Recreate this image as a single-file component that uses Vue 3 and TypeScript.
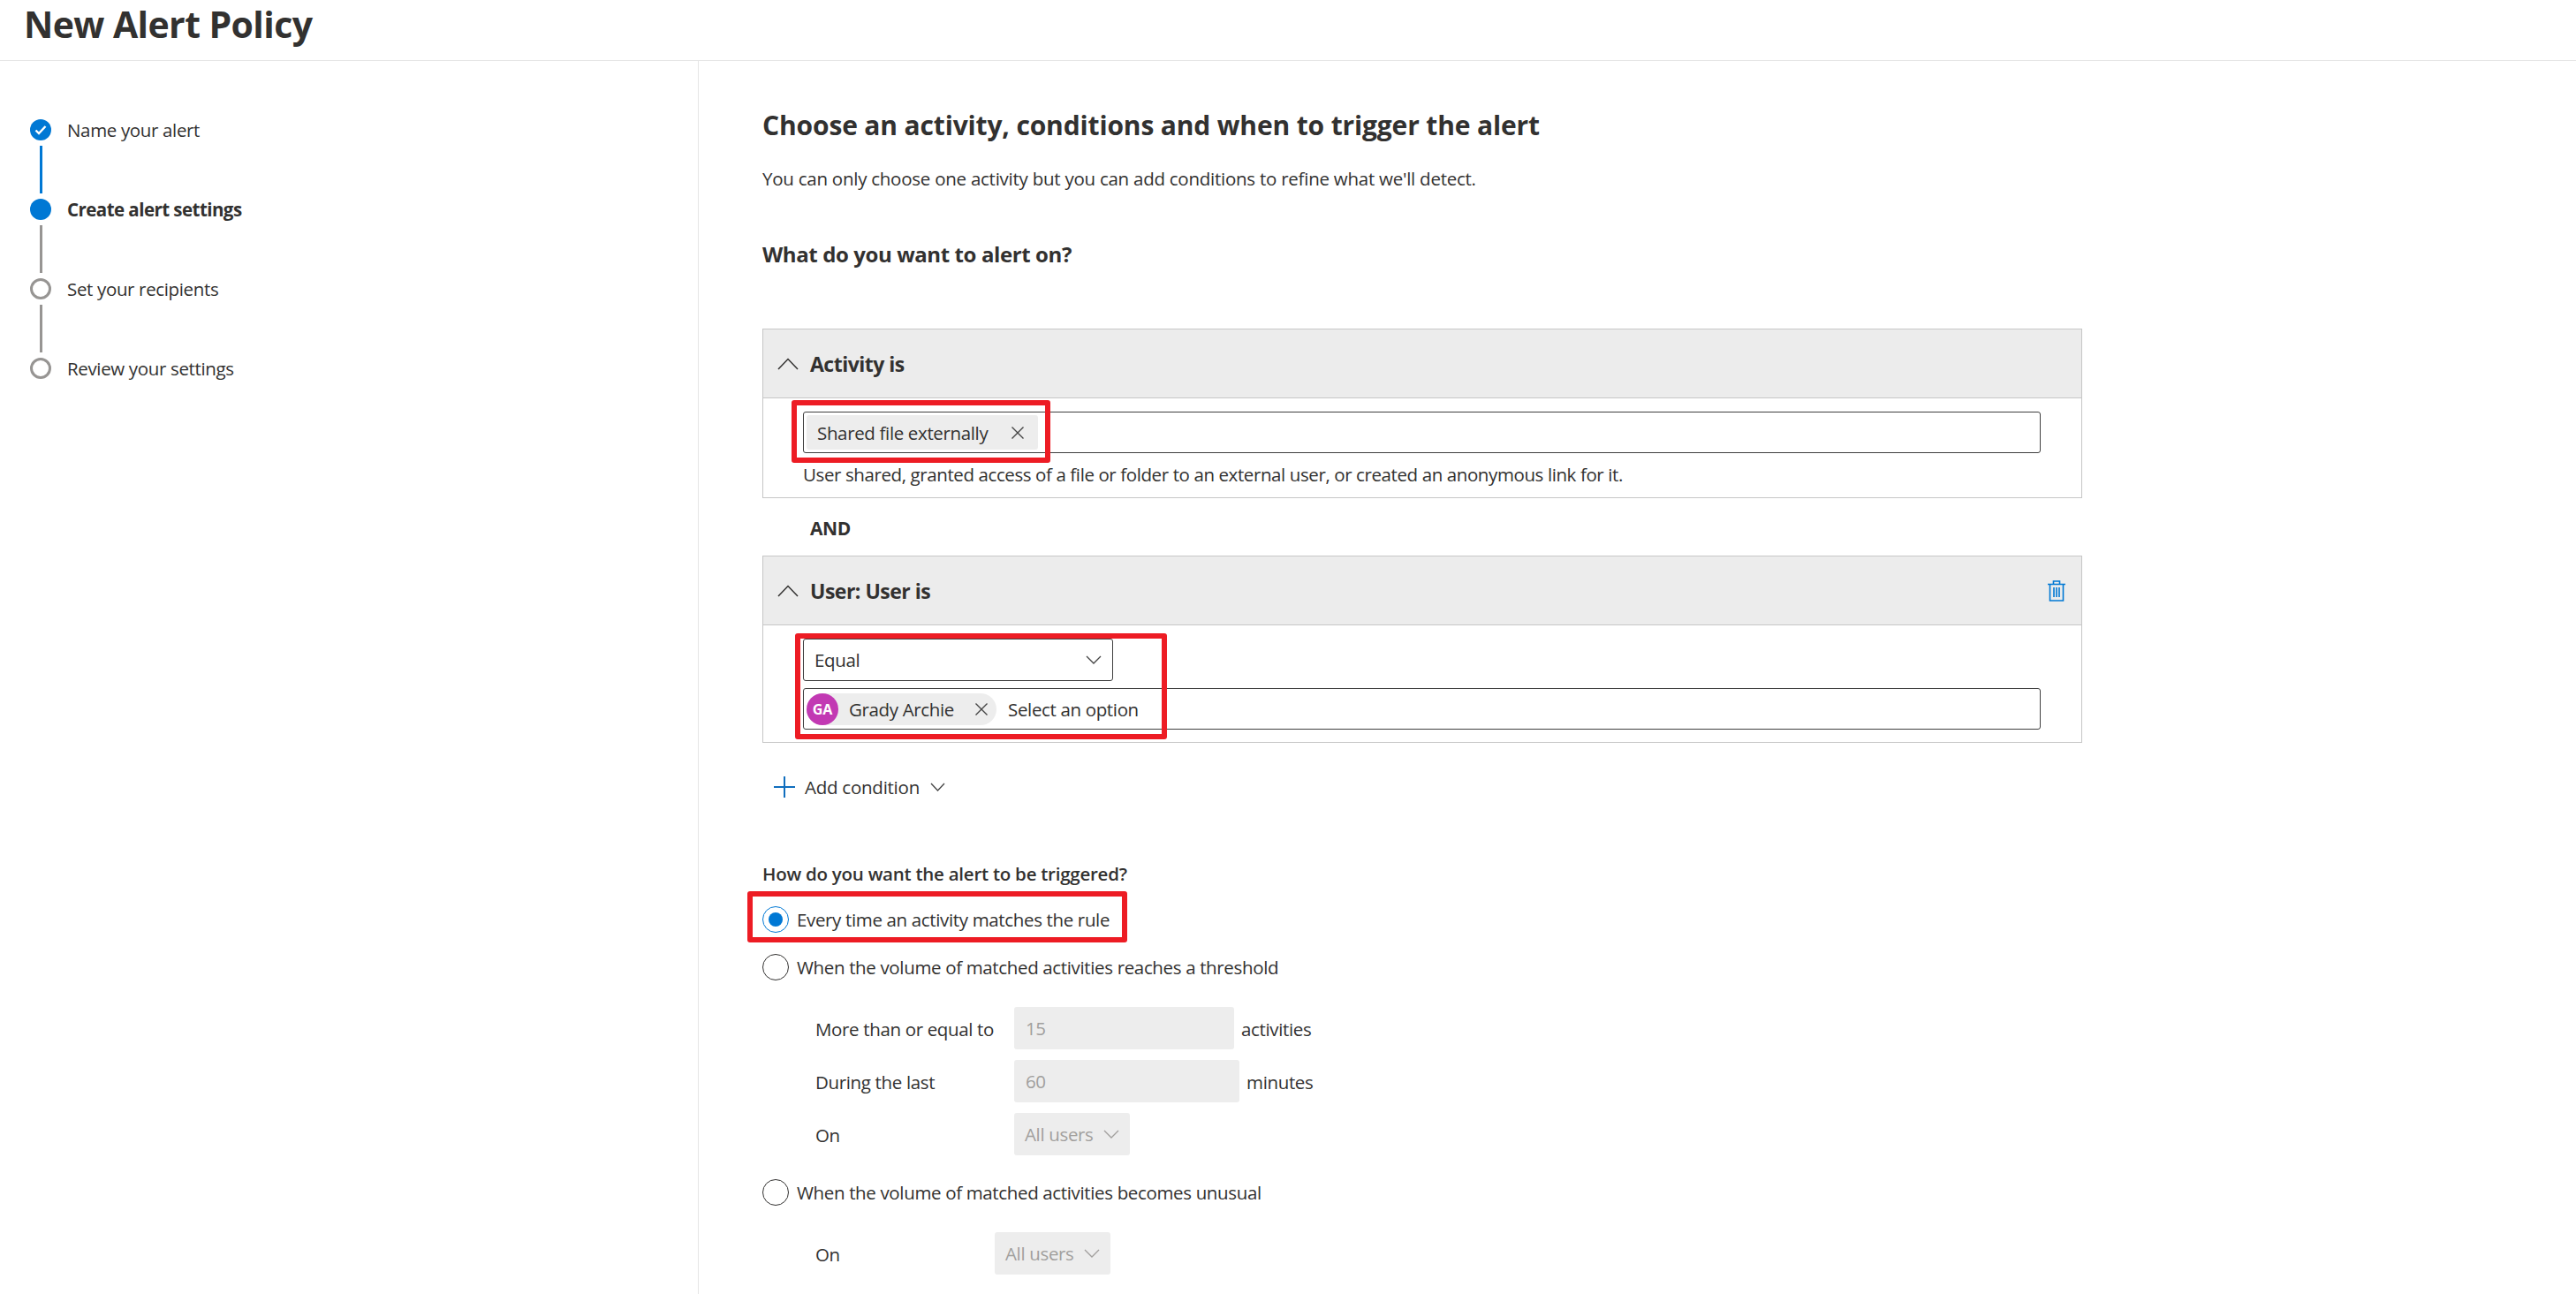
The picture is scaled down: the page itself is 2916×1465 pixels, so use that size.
<script setup lang="ts">
interface Step { label: string; state: 'done' | 'current' | 'todo' }
const steps: Step[] = [
  { label: 'Name your alert', state: 'done' },
  { label: 'Create alert settings', state: 'current' },
  { label: 'Set your recipients', state: 'todo' },
  { label: 'Review your settings', state: 'todo' },
]
</script>

<template>
  <div class="page">
    <header class="top"><h1>New Alert Policy</h1></header>
    <div class="body">
      <aside class="side">
        <div v-for="(s, i) in steps" :key="s.label" class="step">
          <div class="marker">
            <span class="dot" :class="s.state">
              <svg v-if="s.state === 'done'" width="16" height="16" viewBox="0 0 16 16"><path d="M2.5 8.5l3.5 3.5 7.5-8" fill="none" stroke="#fff" stroke-width="2.4"/></svg>
            </span>
            <span v-if="i < steps.length - 1" class="line" :class="{ blue: s.state === 'done' }"></span>
          </div>
          <span class="step-label" :class="{ bold: s.state === 'current' }">{{ s.label }}</span>
        </div>
      </aside>

      <main class="main">
        <h2>Choose an activity, conditions and when to trigger the alert</h2>
        <p class="intro">You can only choose one activity but you can add conditions to refine what we'll detect.</p>
        <h3>What do you want to alert on?</h3>

        <section class="card first">
          <div class="card-head">
            <svg class="up" width="24" height="14" viewBox="0 0 24 14"><path d="M1 13L12 1.5 23 13" fill="none" stroke="#323130" stroke-width="1.5"/></svg>
            <span>Activity is</span>
          </div>
          <div class="card-body">
            <div class="field">
              <span class="chip">
                <span class="chip-text">Shared file externally</span>
                <svg width="14" height="14" viewBox="0 0 14 14"><path d="M0.5 0.5l13 13M13.5 0.5l-13 13" stroke="#444" stroke-width="1.4"/></svg>
              </span>
              <i class="mark m1"></i>
            </div>
            <p class="desc">User shared, granted access of a file or folder to an external user, or created an anonymous link for it.</p>
          </div>
        </section>

        <div class="and">AND</div>

        <section class="card second">
          <div class="card-head">
            <svg class="up" width="24" height="14" viewBox="0 0 24 14"><path d="M1 13L12 1.5 23 13" fill="none" stroke="#323130" stroke-width="1.5"/></svg>
            <span>User: User is</span>
            <svg class="trash" width="20" height="24" viewBox="0 0 20 24" fill="none" stroke="#0078d4" stroke-width="1.6">
              <path d="M0 4.5h20M6.5 4.5V1h7v3.5M2.5 4.5V23h15V4.5M7 8v11M10 8v11M13 8v11"/>
            </svg>
          </div>
          <div class="card-body user">
            <div class="select">
              <span>Equal</span>
              <svg width="18" height="10" viewBox="0 0 18 10"><path d="M1 1l8 8 8-8" fill="none" stroke="#444" stroke-width="1.3"/></svg>
            </div>
            <div class="field people">
              <span class="pill">
                <span class="avatar">GA</span>
                <span class="pill-name">Grady Archie</span>
                <svg width="14" height="14" viewBox="0 0 14 14"><path d="M0.5 0.5l13 13M13.5 0.5l-13 13" stroke="#444" stroke-width="1.4"/></svg>
              </span>
              <span class="placeholder">Select an option</span>
            </div>
            <i class="mark m2"></i>
          </div>
        </section>

        <div class="add">
          <svg width="24" height="24" viewBox="0 0 24 24"><path d="M12 0v24M0 12h24" stroke="#106ebe" stroke-width="2"/></svg>
          <span>Add condition</span>
          <svg width="17" height="10" viewBox="0 0 17 10"><path d="M1 1l7.5 8L16 1" fill="none" stroke="#444" stroke-width="1.3"/></svg>
        </div>

        <div class="question">How do you want the alert to be triggered?</div>

        <label class="radio r1">
          <span class="ring on"><span class="inner"></span></span>
          <span>Every time an activity matches the rule</span>
          <i class="mark m3"></i>
        </label>
        <label class="radio r2">
          <span class="ring"></span>
          <span>When the volume of matched activities reaches a threshold</span>
        </label>

        <div class="rows">
          <div class="row">
            <span class="row-label">More than or equal to</span>
            <span class="box w1">15</span>
            <span class="unit">activities</span>
          </div>
          <div class="row">
            <span class="row-label">During the last</span>
            <span class="box w2">60</span>
            <span class="unit">minutes</span>
          </div>
          <div class="row">
            <span class="row-label">On</span>
            <span class="box drop">All users
              <svg width="18" height="10" viewBox="0 0 18 10"><path d="M1 1l8 8 8-8" fill="none" stroke="#a19f9d" stroke-width="1.3"/></svg>
            </span>
          </div>
        </div>

        <label class="radio r3">
          <span class="ring"></span>
          <span>When the volume of matched activities becomes unusual</span>
        </label>

        <div class="rows last">
          <div class="row">
            <span class="row-label short">On</span>
            <span class="box drop">All users
              <svg width="18" height="10" viewBox="0 0 18 10"><path d="M1 1l8 8 8-8" fill="none" stroke="#a19f9d" stroke-width="1.3"/></svg>
            </span>
          </div>
        </div>
      </main>
    </div>
  </div>
</template>

<style>
html, body { margin: 0; background: #fff; overflow: hidden; }
</style>

<style scoped>
.page {
  height: 1465px;
  display: flex;
  flex-direction: column;
  font-family: "Open Sans", "Noto Sans", sans-serif;
  font-size: 20.5px;
  color: #323130;
  letter-spacing: -0.35px;
}
.top {
  height: 69px;
  box-sizing: border-box;
  border-bottom: 1px solid #e6e6e6;
  padding-left: 27px;
  flex: none;
}
h1 {
  margin: 0;
  font-size: 41px;
  line-height: 54px;
  font-weight: 700;
  letter-spacing: -0.6px;
}
.body { flex: 1; display: flex; min-height: 0; }
.side {
  width: 790px;
  flex: none;
  border-right: 1px solid #e6e6e6;
  box-sizing: content-box;
  padding-top: 66px;
}
.step { display: flex; height: 90px; padding-left: 34px; }
.marker { width: 24px; display: flex; flex-direction: column; align-items: center; }
.dot {
  width: 24px;
  height: 24px;
  border-radius: 50%;
  box-sizing: border-box;
  flex: none;
  display: flex;
  align-items: center;
  justify-content: center;
}
.dot.done, .dot.current { background: #0078d4; }
.dot.todo { border: 3px solid #979593; }
.line { width: 3px; height: 54px; margin-top: 6px; background: #979593; }
.line.blue { background: #0078d4; }
.step-label { margin-left: 18px; line-height: 24px; }
.step-label.bold { font-weight: 700; letter-spacing: -0.55px; }

.main { flex: 1; padding: 53px 0 0 72px; min-width: 0; }
h2 { margin: 0; font-size: 30px; line-height: 40px; font-weight: 700; letter-spacing: -0.15px; }
.intro { margin: 25px 0 0; line-height: 30px; letter-spacing: -0.25px; }
h3 { margin: 53px 0 0; font-size: 24px; line-height: 36px; font-weight: 700; letter-spacing: -0.4px; }

.card {
  width: 1494px;
  box-sizing: border-box;
  border: 1px solid #c6c6c6;
}
.card.first { margin-top: 66px; height: 192px; }
.card.second { height: 212px; }
.card-head {
  height: 78px;
  box-sizing: border-box;
  background: #ececec;
  border-bottom: 1px solid #c6c6c6;
  display: flex;
  align-items: center;
  padding-left: 16px;
  font-size: 23px;
  font-weight: 700;
  letter-spacing: -0.5px;
}
.card-head > span { margin-left: 13px; }
.trash { margin-left: auto; margin-right: 18px; }
.card-body { padding: 15px 0 0 45px; position: relative; }
.field {
  width: 1401px;
  height: 47px;
  box-sizing: border-box;
  border: 1px solid #3f3f3f;
  border-radius: 3px;
  position: relative;
  display: flex;
  align-items: center;
  padding-left: 3px;
}
.chip {
  width: 262px;
  height: 39px;
  box-sizing: border-box;
  border-radius: 3px;
  background: #ededed;
  display: flex;
  align-items: center;
  padding-left: 12px;
}
.chip-text { width: 220px; white-space: nowrap; }
.desc { margin: 9px 0 0; line-height: 30px; white-space: nowrap; letter-spacing: -0.4px; }
.mark {
  position: absolute;
  box-sizing: border-box;
  border: 6px solid #ed1c24;
  border-radius: 3px;
  pointer-events: none;
}
.m1 { left: -14px; top: -14px; width: 293px; height: 71px; }
.m2 { left: 36px; top: 9px; width: 421px; height: 120px; }
.m3 { left: -17px; top: -17px; width: 430px; height: 58px; }
.and {
  height: 65px;
  display: flex;
  align-items: center;
  padding: 3px 0 0 54px;
  box-sizing: border-box;
  font-weight: 700;
  font-size: 21px;
  letter-spacing: -0.4px;
}
.select {
  width: 351px;
  height: 48px;
  box-sizing: border-box;
  border: 1px solid #3f3f3f;
  border-radius: 3px;
  display: flex;
  align-items: center;
  justify-content: space-between;
  padding: 0 12px 0 12px;
}
.people { margin-top: 8px; }
.pill {
  width: 215px;
  height: 36px;
  border-radius: 18px;
  background: #ededed;
  display: flex;
  align-items: center;
  flex: none;
}
.avatar {
  width: 36px;
  height: 36px;
  border-radius: 50%;
  background: #c239b3;
  color: #fff;
  font-size: 16px;
  font-weight: 700;
  letter-spacing: 0;
  display: flex;
  align-items: center;
  justify-content: center;
  flex: none;
}
.pill-name { margin-left: 12px; width: 143px; white-space: nowrap; }
.placeholder { margin-left: 13px; white-space: nowrap; }
.add {
  margin: 30px 0 0 13px;
  height: 40px;
  display: flex;
  align-items: center;
}
.add span { margin: 0 12px 0 11px; letter-spacing: -0.25px; }
.question { margin-top: 63px; line-height: 30px; font-weight: 600; letter-spacing: -0.25px; }
.radio { display: flex; align-items: center; height: 30px; position: relative; }
.radio > span:nth-child(2) { margin-left: 9px; white-space: nowrap; }
.r1 { margin-top: 22px; }
.r2 { margin-top: 24px; }
.r3 { margin-top: 27px; }
.ring {
  width: 30px;
  height: 30px;
  box-sizing: border-box;
  border: 1px solid #323130;
  border-radius: 50%;
  flex: none;
  display: flex;
  align-items: center;
  justify-content: center;
}
.ring.on { border-color: #0078d4; }
.inner { width: 16px; height: 16px; border-radius: 50%; background: #0078d4; }
.rows { margin: 30px 0 0 60px; display: flex; flex-direction: column; gap: 12px; }
.row { display: flex; align-items: center; height: 48px; }
.row-label { width: 225px; flex: none; padding-top: 2px; white-space: nowrap; }
.row-label.short { width: 203px; }
.box {
  height: 48px;
  box-sizing: border-box;
  background: #ededed;
  border-radius: 3px;
  color: #a19f9d;
  display: flex;
  align-items: center;
  padding-left: 13px;
}
.w1 { width: 249px; }
.w2 { width: 255px; }
.unit { margin-left: 8px; padding-top: 2px; }
.drop { width: 131px; padding-left: 12px; justify-content: space-between; padding-right: 12px; white-space: nowrap; }
</style>
